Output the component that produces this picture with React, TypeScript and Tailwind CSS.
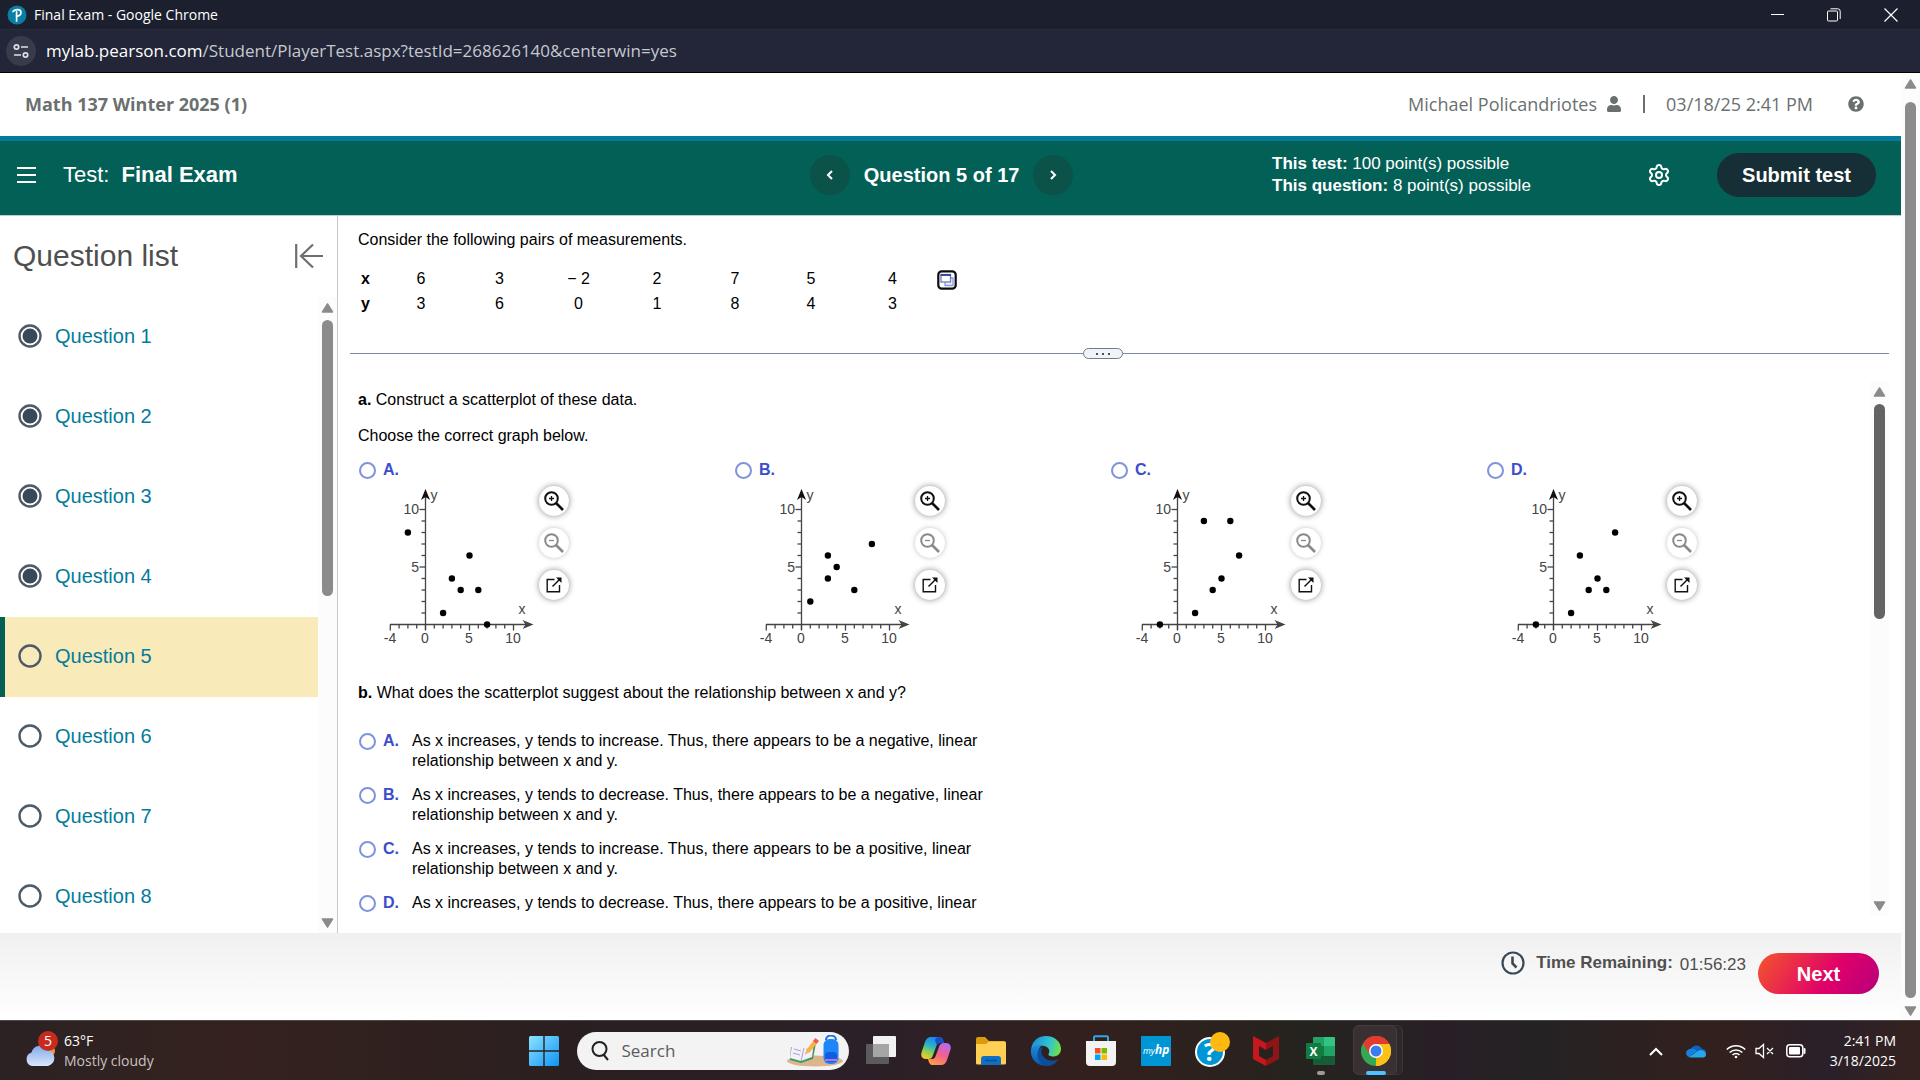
import React from "react";
import { Settings } from "lucide-react";
import { FaUser, FaQuestionCircle } from "react-icons/fa";

type Point = [number, number];

const plots: { id: string; points: Point[] }[] = [
  { id: "A", points: [[-2, 8], [2, 1], [3, 4], [4, 3], [5, 6], [6, 3], [7, 0]] },
  { id: "B", points: [[1, 2], [3, 4], [3, 6], [4, 5], [6, 3], [8, 7]] },
  { id: "C", points: [[-2, 0], [2, 1], [3, 9], [4, 3], [5, 4], [6, 9], [7, 6]] },
  { id: "D", points: [[-2, 0], [2, 1], [3, 6], [4, 3], [5, 4], [6, 3], [7, 8]] },
];

const answers = [
  { id: "A", text: "As x increases, y tends to increase. Thus, there appears to be a negative, linear relationship between x and y." },
  { id: "B", text: "As x increases, y tends to decrease. Thus, there appears to be a negative, linear relationship between x and y." },
  { id: "C", text: "As x increases, y tends to increase. Thus, there appears to be a positive, linear relationship between x and y." },
  { id: "D", text: "As x increases, y tends to decrease. Thus, there appears to be a positive, linear" },
];

const questions = [1, 2, 3, 4, 5, 6, 7, 8];

function Arrow({ down = false }: { down?: boolean }) {
  return (
    <svg width="13" height="10" viewBox="0 0 13 10" className="shrink-0" aria-hidden="true">
      <path
        d={down ? "M1.5 1h10L6.5 9z" : "M1.5 9h10L6.5 1z"}
        fill="#8b8b8b"
        stroke="#8b8b8b"
        strokeWidth="1.5"
        strokeLinejoin="round"
      />
    </svg>
  );
}

function WindowChrome() {
  return (
    <header className="shrink-0 border-b border-black text-white">
      <div className="flex h-[29px] items-center bg-[#1b1f2e]">
        <svg width="20" height="20" viewBox="0 0 20 20" className="ml-[7px]" aria-hidden="true">
          <circle cx="10" cy="10" r="9.5" fill="#0a7ea4" />
          <path d="M6 6.5C8 4 14 3.6 14 7.6C14 10.6 11 11.4 9.4 10.8M9.6 6.8V14.2M9.4 15.8h.4" fill="none" stroke="#fff" strokeWidth="1.7" strokeLinecap="round" />
        </svg>
        <h1 className="ml-[7px] font-['Open_Sans'] text-[14px] leading-5">Final Exam - Google Chrome</h1>
        <div className="ml-auto flex items-center">
          <button aria-label="Minimize" className="flex h-[29px] w-14 items-center justify-center">
            <svg width="14" height="14" viewBox="0 0 14 14"><path d="M0 6.5h13" stroke="#fff" /></svg>
          </button>
          <button aria-label="Restore" className="flex h-[29px] w-14 items-center justify-center">
            <svg width="14" height="14" viewBox="0 0 14 14" fill="none" stroke="#fff">
              <rect x=".5" y="3" width="10" height="10" rx="1" />
              <path d="M3.5 .8h7.3a2.4 2.4 0 0 1 2.4 2.4V11" />
            </svg>
          </button>
          <button aria-label="Close" className="flex h-[29px] w-[58px] items-center justify-center">
            <svg width="14" height="14" viewBox="0 0 14 14"><path d="M.5 .5l13 13M13.500 .5l-13 13" stroke="#fff" strokeWidth="1.2" /></svg>
          </button>
        </div>
      </div>
      <div className="flex h-[43px] items-center border-t border-[#2b2c3a] bg-[#222638]">
        <button aria-label="View site information" className="ml-1.5 flex size-[30px] items-center justify-center rounded-full bg-[#373b4c]">
          <svg width="16" height="16" viewBox="0 0 16 16" fill="none" stroke="#dfe1e8" strokeWidth="1.7">
            <circle cx="3.500" cy="4" r="2.200" />
            <path d="M8 4h7M1 12h7" />
            <circle cx="12.500" cy="12" r="2.200" />
          </svg>
        </button>
        <p className="ml-2.5 font-['Open_Sans'] text-[17px] leading-6 text-[#c6c8d0]">
          <span className="text-white">mylab.pearson.com</span>/Student/PlayerTest.aspx?testId=268626140&amp;centerwin=yes
        </p>
      </div>
    </header>
  );
}

function CourseHeader() {
  return (
    <div className="flex h-[63px] shrink-0 items-center bg-white pb-0.5 pl-[25px] font-['Open_Sans'] text-[18px] leading-6 text-[#6a7070]">
      <span className="font-bold">Math 137 Winter 2025 (1)</span>
      <span className="ml-auto">Michael Policandriotes</span>
      <FaUser size={16} className="ml-[9px]" />
      <span className="ml-[21px] h-[18px] w-0.5 bg-[#6a7070]" />
      <time className="ml-[21px]">03/18/25 2:41 PM</time>
      <a href="#help" aria-label="Help" className="mr-[37px] ml-[35px]">
        <FaQuestionCircle size={16} />
      </a>
    </div>
  );
}

function RoundNav({ label, d }: { label: string; d: string }) {
  return (
    <button aria-label={label} className="flex size-10 items-center justify-center rounded-full bg-[#0b5249]">
      <svg width="12" height="12" viewBox="0 0 12 12" fill="none" stroke="#fff" strokeWidth="2">
        <path d={d} />
      </svg>
    </button>
  );
}

function TestBar() {
  return (
    <div className="flex h-20 shrink-0 items-center border-t-[5px] border-b border-t-[#047a9c] border-b-[#c7c7d0] bg-[#036056] pb-1.5 text-white">
      <div className="flex w-[42.6%] items-center pl-[17px]">
        <button aria-label="Menu">
          <svg width="19" height="18" viewBox="0 0 19 18" stroke="#fff" strokeWidth="2"><path d="M0 2h19M0 9h19M0 16h19" /></svg>
        </button>
        <span className="ml-[27px] text-[22px] leading-7">Test:</span>
        <span className="ml-3 text-[22px] leading-7 font-bold">Final Exam</span>
      </div>
      <div className="flex items-center gap-[14px]">
        <RoundNav label="Previous question" d="M8 2 4 6l4 4" />
        <span className="text-[20px] leading-6 font-bold">Question 5 of 17</span>
        <RoundNav label="Next question" d="M4 2l4 4-4 4" />
      </div>
      <div className="ml-auto flex items-center">
        <div className="w-[375px] text-[17px] leading-[22px]">
          <p><b>This test:</b> 100 point(s) possible</p>
          <p><b>This question:</b> 8 point(s) possible</p>
        </div>
        <button aria-label="Settings"><Settings size={24} strokeWidth={2} /></button>
        <button className="mr-[25px] ml-[46px] h-11 w-[159px] rounded-full bg-[#162e36] text-[20px] font-bold">Submit test</button>
      </div>
    </div>
  );
}

function StatusIcon({ done }: { done: boolean }) {
  return (
    <svg width="24" height="24" viewBox="0 0 24 24" aria-hidden="true">
      <circle cx="12" cy="12" r="10.500" fill="#fff" fillOpacity={done ? 1 : 0} stroke="#4c5a68" strokeWidth="2.400" />
      {done && <circle cx="12" cy="12" r="7.500" fill="#3a4957" />}
    </svg>
  );
}

function Sidebar() {
  return (
    <nav className="flex w-[338px] shrink-0 flex-col overflow-hidden border-r border-[#c7c7d0] bg-white">
      <div className="flex h-[81px] shrink-0 items-center pr-[14px] pb-0.5 pl-[13px]">
        <h2 className="text-[30px] leading-9 text-[#4f4f4f]">Question list</h2>
        <button aria-label="Collapse question list" className="ml-auto">
          <svg width="28" height="26" viewBox="0 0 28 26" fill="none" stroke="#6a7070" strokeWidth="2.200">
            <path d="M1.200 1v24M28 13H6M18 1.500 6 13l12 11.500" />
          </svg>
        </button>
      </div>
      <div className="flex min-h-0 flex-1">
        <ul className="min-w-0 flex-1 overflow-hidden">
          {questions.map((n) => (
            <li key={n}>
              <a
                href={`#question-${n}`}
                aria-current={n === 5 ? "page" : undefined}
                className={
                  n === 5
                    ? "flex h-20 items-center gap-[13px] border-l-[5px] border-[#036056] bg-[#f8ebb9] pb-0.5 pl-[13px] text-[20px] text-[#047a9c]"
                    : "flex h-20 items-center gap-[13px] pb-0.5 pl-[18px] text-[20px] text-[#047a9c]"
                }
              >
                <StatusIcon done={n < 5} />
                Question {n}
              </a>
            </li>
          ))}
        </ul>
        <div className="flex w-[19px] flex-col items-center bg-[#fcfcfc] pt-1.5 pb-[5px]">
          <Arrow />
          <div className="mt-[7px] h-[276px] w-[11px] rounded-full bg-[#8b8b8b]" />
          <div className="flex-1" />
          <Arrow down />
        </div>
      </div>
    </nav>
  );
}

const xs = ["6", "3", "− 2", "2", "7", "5", "4"];
const ys = ["3", "6", "0", "1", "8", "4", "3"];

function DataTable() {
  return (
    <div className="mt-4 flex items-start">
      <table className="table-fixed text-center text-[16px] leading-[25px]">
        <colgroup>
          <col className="w-6" />
          <col className="w-[78px]" />
          <col className="w-[79px]" />
          <col className="w-[79px]" />
          <col className="w-[78px]" />
          <col className="w-[78px]" />
          <col className="w-[74px]" />
          <col className="w-[89px]" />
        </colgroup>
        <tbody>
          <tr>
            <th scope="row" className="pl-[3px] text-left">x</th>
            {xs.map((v, i) => <td key={i}>{v}</td>)}
          </tr>
          <tr>
            <th scope="row" className="pl-[3px] text-left">y</th>
            {ys.map((v, i) => <td key={i}>{v}</td>)}
          </tr>
        </tbody>
      </table>
      <button aria-label="Open data in a new window" className="mt-1">
        <svg width="20" height="20" viewBox="0 0 20 20" fill="none">
          <rect x="1.300" y="1.300" width="17.400" height="17.400" rx="3.500" fill="#fff" stroke="#0b0b12" strokeWidth="2.200" />
          <path d="M8 11v4.500h8V8h-3" fill="#eef0fb" stroke="#8e9ad6" strokeWidth="1.300" />
          <rect x="4" y="4.500" width="9.500" height="7.500" fill="#fff" stroke="#6f7cc4" strokeWidth="1.300" />
          <path d="M3.500 5h10.500" stroke="#3b4a9f" strokeWidth="2" />
        </svg>
      </button>
    </div>
  );
}

const px = (v: number) => 45.5 + v * 8.8;
const py = (v: number) => 142.5 - v * 11.5;

function Scatter({ id, points }: { id: string; points: Point[] }) {
  const xt = [-4, -3, -2, -1, 0, 1, 2, 3, 4, 5, 6, 7, 8, 9, 10];
  const yt = [1, 2, 3, 4, 5, 6, 7, 8, 9, 10];
  return (
    <svg width="158" height="166" viewBox="0 0 158 166" role="img" aria-label={`Scatterplot ${id}`} className="font-['Liberation_Sans']">
      <g stroke="#444" strokeWidth="1.300" fill="none">
        <path d="M10 142.500H146M45.500 15V148" />
        {xt.map((t) => (
          <path key={t} d={`M${px(t)} 142.500v${t % 5 === 0 || t === -4 ? 6 : 4}`} />
        ))}
        {yt.map((t) => (
          <path key={t} d={`M${px(0)} ${py(t)}h${t % 5 === 0 ? -6 : -4}`} />
        ))}
      </g>
      <path d="M45.500 7l4.500 11-4.500-3-4.500 3z" fill="#111" />
      <path d="M153.500 142.500l-11 4.500 3-4.500-3-4.500z" fill="#444" />
      <g fill="#444" fontSize="14" textAnchor="middle">
        <text x="10" y="161">-4</text>
        <text x="45" y="161">0</text>
        <text x="89" y="161">5</text>
        <text x="133" y="161">10</text>
        <text x="39" y="32" textAnchor="end">10</text>
        <text x="39" y="90" textAnchor="end">5</text>
        <text x="54" y="18">y</text>
        <text x="142" y="132">x</text>
      </g>
      {points.map(([x, y]) => (
        <circle key={`${x},${y}`} cx={px(x)} cy={py(y)} r="3.200" fill="#000" />
      ))}
    </svg>
  );
}

function Magnifier({ plus = false }: { plus?: boolean }) {
  const c = plus ? "#111" : "#8a8a8a";
  return (
    <svg width="20" height="20" viewBox="0 0 20 20" fill="none" stroke={c}>
      <circle cx="7.500" cy="7.500" r="6.300" strokeWidth="2" />
      <path d="M12 12l7 7" strokeWidth="2.600" />
      <path d={plus ? "M5 7.500h5M7.500 5v5" : "M5 7.500h5"} strokeWidth="1.300" />
    </svg>
  );
}

function PlotTools({ id }: { id: string }) {
  return (
    <div className="flex flex-col gap-3 pt-1">
      <button aria-label={`Zoom in on graph ${id}`} className="flex size-[30px] items-center justify-center rounded-full bg-white shadow-[0_0_6px_rgba(0,0,0,0.45)]">
        <Magnifier plus />
      </button>
      <button aria-label={`Zoom out of graph ${id}`} className="flex size-[30px] items-center justify-center rounded-full bg-white shadow-[0_0_5px_rgba(0,0,0,0.25)]">
        <Magnifier />
      </button>
      <button aria-label={`Open graph ${id} in a new window`} className="flex size-[30px] items-center justify-center rounded-full bg-white shadow-[0_0_6px_rgba(0,0,0,0.45)]">
        <svg width="16" height="16" viewBox="0 0 16 16" fill="none" stroke="#111" strokeWidth="1.400">
          <path d="M8.500 2.500H1.200v12.300h12.300V8" />
          <path d="M6.500 9.500 14 2" />
          <path d="M10 .500h5.500V6z" fill="#111" stroke="none" />
        </svg>
      </button>
    </div>
  );
}

function Radio({ name, id }: { name: string; id: string }) {
  return (
    <input
      type="radio"
      name={name}
      id={`${name}-${id}`}
      className="size-[17px] shrink-0 appearance-none rounded-full border-2 border-[#7f93dd] bg-white checked:bg-[#3a52cc]"
    />
  );
}

function Question() {
  return (
    <main className="flex min-w-0 flex-1 flex-col bg-white text-[16px] leading-5 text-black">
      <div className="h-[132px] shrink-0 pt-[14px] pl-5">
        <p>Consider the following pairs of measurements.</p>
        <DataTable />
      </div>
      <div className="mr-3 ml-3 flex shrink-0 items-center">
        <div className="h-px flex-1 bg-[#7f8c9f]" />
        <button aria-label="Resize panes" className="flex h-[11px] w-10 items-center justify-center gap-1 rounded-md border border-[#6c7d90] bg-[#f0f4f6]">
          <span className="size-0.5 bg-[#44525f]" />
          <span className="size-0.5 bg-[#44525f]" />
          <span className="size-0.5 bg-[#44525f]" />
        </button>
        <div className="h-px w-[49.8%] bg-[#7f8c9f]" />
      </div>
      <div className="mt-[22px] mr-3 mb-[17px] flex min-h-0 flex-1">
        <div className="min-w-0 flex-1 overflow-hidden pt-[9px] pl-5">
          <p><b>a.</b> Construct a scatterplot of these data.</p>
          <p className="mt-4">Choose the correct graph below.</p>
          <fieldset className="mt-[14px] mr-2 grid grid-cols-4">
            {plots.map((p) => (
              <div key={p.id}>
                <label className="flex items-center gap-[7px] pl-px font-bold text-[#3a4ecb]" htmlFor={`graph-${p.id}`}>
                  <Radio name="graph" id={p.id} />
                  {p.id}.
                </label>
                <div className="mt-0.5 flex items-start gap-px pl-[22px]">
                  <Scatter id={p.id} points={p.points} />
                  <PlotTools id={p.id} />
                </div>
              </div>
            ))}
          </fieldset>
          <p className="mt-[35px]"><b>b.</b> What does the scatterplot suggest about the relationship between x and y?</p>
          <fieldset className="mt-7 flex flex-col gap-[14px]">
            {answers.map((a) => (
              <label key={a.id} className="flex max-w-[660px] items-start pl-px" htmlFor={`answer-${a.id}`}>
                <span className="flex h-5 w-[53px] shrink-0 items-center gap-[7px] font-bold text-[#3a4ecb]">
                  <Radio name="answer" id={a.id} />
                  {a.id}.
                </span>
                {a.text}
              </label>
            ))}
          </fieldset>
        </div>
        <div className="flex w-[19px] shrink-0 flex-col items-center bg-[#fcfcfc] pt-1.5 pb-[5px]">
          <Arrow />
          <div className="mt-[7px] h-[215px] w-[11px] rounded-full bg-[#636363]" />
          <div className="flex-1" />
          <Arrow down />
        </div>
      </div>
    </main>
  );
}

function Footer() {
  return (
    <footer className="flex h-[87px] shrink-0 items-start justify-end bg-linear-to-b from-[#f0f0f0] to-white pt-5 pr-[22px] text-[17px] leading-5 text-[#4f4f4f]">
      <svg width="24" height="24" viewBox="0 0 24 24" fill="none" stroke="#3a4957" strokeWidth="2.200" className="-mt-0.5" aria-hidden="true">
        <circle cx="12" cy="12" r="10.500" />
        <path d="M11.500 5.500V12.500l4 4" strokeWidth="2.600" />
      </svg>
      <b className="ml-[11px]">Time Remaining:</b>
      <span className="mt-0.5 ml-[7px]">01:56:23</span>
      <button className="ml-3 h-[41px] w-[121px] rounded-full bg-[linear-gradient(125deg,#f24f30_5%,#e0006a_60%,#b4007a_100%)] text-[20px] font-bold text-white">Next</button>
    </footer>
  );
}

function Cell({ label, children }: { label: string; children: React.ReactNode }) {
  return <button aria-label={label} className="relative flex h-[60px] w-[55px] items-center justify-center">{children}</button>;
}

function Taskbar() {
  return (
    <div className="grid h-[60px] shrink-0 grid-cols-[1fr_auto_1fr] items-center border-t border-[#4c4a48] bg-[linear-gradient(90deg,#2b2224_0%,#35221e_12%,#2a1f20_30%,#2b2028_45%,#33201d_57%,#25231f_68%,#281f26_75%,#252224_80%,#33201d_90%,#2a202a_95%,#35221e_100%)] pb-[3px] font-['Open_Sans'] text-white">
      <button className="flex items-center text-left">
        <svg width="36" height="42" viewBox="0 0 36 42" className="ml-6" aria-hidden="true">
          <defs>
            <linearGradient id="cloud" x1="0" y1="0" x2="0" y2="1"><stop offset="0" stopColor="#7fa9ee" /><stop offset="1" stopColor="#dbe7fb" /></linearGradient>
          </defs>
          <circle cx="25" cy="21" r="6" fill="#f59a2b" />
          <path d="M8 36a7 7 0 0 1-.5-13.500A9 9 0 0 1 24 20a8.200 8.200 0 0 1 0 16z" fill="url(#cloud)" />
          <circle cx="24" cy="11" r="10" fill="#c72b1e" />
          <text x="24" y="16" fill="#fff" fontSize="14" textAnchor="middle">5</text>
        </svg>
        <span className="ml-1 text-[14px] leading-5">
          <span className="block">63°F</span>
          <span className="block text-[#c9c3c2]">Mostly cloudy</span>
        </span>
      </button>
      <div className="flex items-center">
        <Cell label="Start">
          <svg width="30" height="30" viewBox="0 0 30 30">
            <defs><linearGradient id="win" x1="0" y1="0" x2="1" y2="1"><stop offset="0" stopColor="#8be3ff" /><stop offset="1" stopColor="#0f93f5" /></linearGradient></defs>
            <path d="M0 1.500A1.500 1.500 0 0 1 1.500 0H14.300V14.300H0zM15.700 0H28.500A1.500 1.500 0 0 1 30 1.500V14.300H15.700zM0 15.700H14.300V30H1.500A1.500 1.500 0 0 1 0 28.500zM15.700 15.700H30V28.500A1.500 1.500 0 0 1 28.500 30H15.700z" fill="url(#win)" />
          </svg>
        </Cell>
        <label className="mx-[5px] flex h-[38px] w-[272px] items-center rounded-full bg-[#f3f3f3] pl-[13px]">
          <svg width="20" height="20" viewBox="0 0 20 20" fill="none" stroke="#222" strokeWidth="2" aria-hidden="true">
            <circle cx="9.500" cy="8" r="7" /><path d="M13.500 13.500l4.500 5.500" />
          </svg>
          <input aria-label="Search" placeholder="Search" className="ml-3 w-[120px] bg-transparent text-[17px] text-[#222] outline-none placeholder:text-[#5c5c5c]" />
          <svg width="58" height="32" viewBox="0 0 58 32" className="mr-[6px] ml-auto" aria-hidden="true">
            <ellipse cx="30" cy="26" rx="28" ry="5.500" fill="#dcb58c" />
            <path d="M6 12l14 2 11-6-3 16-12 4-11-3z" fill="#3f9a5f" />
            <path d="M7 10l12 3 10-6-2 15-11 4-11-3z" fill="#f4f0fb" />
            <path d="M19 13l-3 13M9 14l7 2M8 18l7 2M21 15l5-3M20 19l5-3" stroke="#a9a2c4" fill="none" />
            <path d="M20 19l2-5 7-9 3 3-7 9z" fill="#f8b24a" />
            <path d="M28 6l2.500-3 3.500 3-2.500 3z" fill="#ef5b50" />
            <path d="M41 5a5 4.500 0 0 1 10 0" fill="none" stroke="#1573e6" strokeWidth="2" />
            <rect x="38.500" y="4" width="15" height="25" rx="6" fill="#1f86f7" />
            <rect x="40" y="17" width="12" height="10" rx="4" fill="#0d5fe0" />
            <path d="M40 25h12" stroke="#c86bea" strokeWidth="2" />
          </svg>
        </label>
        <Cell label="Task view">
          <svg width="32" height="32" viewBox="0 0 32 32">
            <rect x="1" y="9" width="23" height="20" rx="1" fill="#5b5a5c" />
            <rect x="8" y="1" width="23" height="21" rx="1" fill="#f1f1f1" />
            <path d="M8 9h16v13H8z" fill="#a5a5a5" />
          </svg>
        </Cell>
        <Cell label="Copilot">
          <svg width="30" height="28" viewBox="0 0 30 28">
            <defs>
              <linearGradient id="cpl" x1="0.600" y1="0" x2="0.200" y2="1"><stop offset="0" stopColor="#1f7ff0" /><stop offset=".4" stopColor="#28b4c8" /><stop offset=".7" stopColor="#8fd24c" /><stop offset="1" stopColor="#ffc627" /></linearGradient>
              <linearGradient id="cpr" x1="0.800" y1="0" x2="0.300" y2="1"><stop offset="0" stopColor="#b36bf5" /><stop offset=".5" stopColor="#f0608f" /><stop offset="1" stopColor="#ff9a4a" /></linearGradient>
            </defs>
            <path d="M18 0c3 0 4 2 5 6h-4c-2 0-3 1-4 4l-3 8c-1 3-2 4-5 4H5c-4 0-6-3-4-8L4 5c1-3 3-5 6-5z" fill="url(#cpl)" />
            <path d="M12 28c-3 0-4-2-5-6h4c2 0 3-1 4-4l3-8c1-3 2-4 5-4h2c4 0 6 3 4 8l-3 9c-1 3-3 5-6 5z" fill="url(#cpr)" />
            <path d="M18 0c3 0 4 2 5 6h-4c-1.500 0-2.500.700-3.300 2L14 3c.5-2 2-3 4-3z" fill="#1550c8" />
          </svg>
        </Cell>
        <Cell label="File Explorer">
          <svg width="32" height="28" viewBox="0 0 32 28">
            <path d="M1 2a2 2 0 0 1 2-2h7l4 4h15a2 2 0 0 1 2 2v8H1z" fill="#dc9b0c" />
            <path d="M1 7h10l3-2.500h15a2 2 0 0 1 2 2V26a1.500 1.500 0 0 1-1.500 1.500h-27A1.500 1.500 0 0 1 1 26z" fill="#ffd052" />
            <path d="M6 28v-6a3 3 0 0 1 3-3h14a3 3 0 0 1 3 3v6z" fill="#0f70c4" />
            <path d="M10 23.500h12" stroke="#0a4b8d" strokeWidth="1.500" />
          </svg>
        </Cell>
        <Cell label="Microsoft Edge">
          <svg width="32" height="32" viewBox="0 0 32 32">
            <defs>
              <linearGradient id="eg1" x1="0" y1="0.300" x2="1" y2="0.500"><stop offset="0" stopColor="#1a8fd8" /><stop offset=".6" stopColor="#2fc3d0" /><stop offset="1" stopColor="#6fe04a" /></linearGradient>
              <linearGradient id="eg2" x1="0" y1="0" x2="0" y2="1"><stop offset="0" stopColor="#1b8ee0" /><stop offset="1" stopColor="#0c55a8" /></linearGradient>
            </defs>
            <path d="M1 15C2 5 9 1 16 1c9 0 15 6 15 13 0 5-4 7.500-8 7.500-3 0-5-1-4.500-2.500C20 17 20 12 14 11 8 10 3 12 1 15z" fill="url(#eg1)" />
            <path d="M1 15c2-4 7-6 12-5-3 1-5 5-5 9 0 6 5 11 11 11.500C10 32.500 0 26 1 15z" fill="url(#eg2)" />
            <path d="M13 12c-3 3-2 9 3 12 4 2.500 9 2 12.500 0C26 28 22 31 18 31c-6-.500-10.500-5-10.500-11 0-4 2-7 5.500-8z" fill="#0b4f9c" />
          </svg>
        </Cell>
        <Cell label="Microsoft Store">
          <svg width="30" height="32" viewBox="0 0 30 32">
            <path d="M8 7V2.500A1.200 1.200 0 0 1 9.200 1.300h11.600A1.200 1.200 0 0 1 22 2.500V7" fill="none" stroke="#2aa8e6" strokeWidth="2" />
            <path d="M0 6h30v21a4 4 0 0 1-4 4H4a4 4 0 0 1-4-4z" fill="#f3f3f3" />
            <path d="M9 13h5.500v5.500H9z" fill="#f25022" /><path d="M15.500 13H21v5.500h-5.500z" fill="#7fba00" />
            <path d="M9 19.500h5.500V25H9z" fill="#00a4ef" /><path d="M15.500 19.500H21V25h-5.500z" fill="#ffb900" />
          </svg>
        </Cell>
        <Cell label="myHP">
          <svg width="30" height="30" viewBox="0 0 30 30">
            <rect width="30" height="30" rx="1" fill="#0096d6" />
            <text x="2" y="18" fill="#fff" fontSize="9" fontStyle="italic" fontFamily="Open Sans">my</text>
            <text x="14" y="18" fill="#fff" fontSize="12" fontWeight="bold" fontStyle="italic" fontFamily="Open Sans">hp</text>
          </svg>
        </Cell>
        <Cell label="HP Support">
          <svg width="38" height="38" viewBox="0 0 38 38">
            <circle cx="18" cy="20" r="14" fill="#0096d6" stroke="#fff" strokeWidth="2" />
            <text x="18" y="29" fill="#fff" fontSize="25" fontWeight="bold" textAnchor="middle" fontFamily="Open Sans">?</text>
            <circle cx="28" cy="10" r="10" fill="#ffb910" />
          </svg>
        </Cell>
        <Cell label="McAfee">
          <svg width="26" height="30" viewBox="0 0 26 30">
            <path d="M0 0l13 7v7L6 10v10l7 4v6L0 23z" fill="#c8161d" />
            <path d="M26 0L13 7v7l7-4v10l-7 4v6l13-7z" fill="#8f1418" />
          </svg>
        </Cell>
        <Cell label="Excel">
          <svg width="30" height="28" viewBox="0 0 30 28">
            <path d="M7 1a1 1 0 0 1 1-1h10v9H7z" fill="#21a366" /><path d="M18 0h10a1 1 0 0 1 1 1v8H18z" fill="#33c481" />
            <path d="M7 9h11v10H7z" fill="#107c41" /><path d="M18 9h11v10H18z" fill="#21a366" />
            <path d="M7 19h22v8a1 1 0 0 1-1 1H8a1 1 0 0 1-1-1z" fill="#185c37" />
            <rect y="6" width="15" height="16" rx="1" fill="#107c41" />
            <text x="7.500" y="18.500" fill="#fff" fontSize="12" fontWeight="bold" textAnchor="middle" fontFamily="Open Sans">X</text>
          </svg>
          <span className="absolute bottom-1.5 h-1 w-2 rounded-full bg-[#a09a98]" />
        </Cell>
        <Cell label="Google Chrome">
          <span className="absolute top-1 left-1 h-[50px] w-[50px] rounded-md border border-[#3d3537] bg-[#2f2729]" />
          <span className="absolute top-1 left-1 h-[50px] w-11 rounded-md border border-[#443c3e] bg-[#383032]" />
          <svg width="30" height="30" viewBox="0 0 30 30" className="relative">
            <path d="M15 15L2 7.500A15 15 0 0 1 28 7.500z" fill="#ea4335" />
            <path d="M15 15L28 7.500A15 15 0 0 1 15 30z" fill="#fbbc05" />
            <path d="M15 15L15 30A15 15 0 0 1 2 7.500z" fill="#34a853" />
            <path d="M15 8h13.300A15 15 0 0 1 15 30L21 18.500z" fill="#fbc116" />
            <path d="M2 7.500A15 15 0 0 1 28.300 8H15l-6 10.500z" fill="#e33b2e" />
            <circle cx="15" cy="15" r="7" fill="#fff" />
            <circle cx="15" cy="15" r="5.500" fill="#3b7ded" />
          </svg>
          <span className="absolute bottom-1.5 h-1 w-5 rounded-full bg-[#4cc2ff]" />
        </Cell>
      </div>
      <div className="flex items-center justify-end pr-6">
        <button aria-label="Show hidden icons">
          <svg width="14" height="9" viewBox="0 0 14 9" fill="none" stroke="#fff" strokeWidth="2"><path d="M1 8l6-6 6 6" /></svg>
        </button>
        <button aria-label="OneDrive" className="ml-[23px]">
          <svg width="20" height="14" viewBox="0 0 20 14">
            <path d="M5 5a6 6 0 0 1 11 0c3 0 4 2 4 4H0c0-2 2-4 5-4z" fill="#0b63c0" />
            <path d="M4 5c3-1 5 0 7 2l-8 6C-1 12-1 6 4 5z" fill="#1680db" />
            <path d="M3 13L12 7c3-2 8 0 8 3.500 0 2-1.500 3-3 3H4z" fill="#28a8ea" />
          </svg>
        </button>
        <button aria-label="Network, volume and battery" className="ml-5 flex items-center">
          <svg width="20" height="15" viewBox="0 0 20 15" fill="none" stroke="#fff" strokeWidth="1.600">
            <path d="M.8 5.500a13 13 0 0 1 18.400 0M3.700 8.500a9 9 0 0 1 12.600 0M6.500 11a5 5 0 0 1 7 0" />
            <circle cx="10" cy="13" r="1.300" fill="#fff" stroke="none" />
          </svg>
          <svg width="20" height="16" viewBox="0 0 20 16" fill="none" stroke="#fff" strokeWidth="1.300" className="ml-[9px]">
            <path d="M1 5.500h3L8.500 1.500v13L4 10.500H1zM12 5l6 6M18 5l-6 6" />
          </svg>
          <svg width="20" height="14" viewBox="0 0 20 14" fill="none" className="ml-[11px]">
            <rect x=".8" y=".8" width="16" height="12" rx="3" stroke="#fff" strokeWidth="1.500" />
            <rect x="3" y="3" width="11" height="7.600" rx="1" fill="#fff" />
            <path d="M18.500 5v4" stroke="#fff" strokeWidth="2" strokeLinecap="round" />
          </svg>
        </button>
        <button className="ml-6 text-right text-[14px] leading-5">
          <span className="block">2:41 PM</span>
          <span className="block">3/18/2025</span>
        </button>
      </div>
    </div>
  );
}

export default function App() {
  return (
    <div className="flex h-screen flex-col overflow-hidden bg-white font-['Liberation_Sans',Arial,sans-serif]">
      <WindowChrome />
      <div className="flex min-h-0 flex-1">
        <div className="flex min-w-0 flex-1 flex-col">
          <CourseHeader />
          <TestBar />
          <div className="flex min-h-0 flex-1">
            <Sidebar />
            <Question />
          </div>
          <Footer />
        </div>
        <div className="flex w-[19px] shrink-0 flex-col items-center bg-[#fcfcfc] pt-1.5 pb-1">
          <Arrow />
          <div className="mt-[13px] mb-2 w-[11px] flex-1 rounded-full bg-[#8b8b8b]" />
          <Arrow down />
        </div>
      </div>
      <Taskbar />
    </div>
  );
}
